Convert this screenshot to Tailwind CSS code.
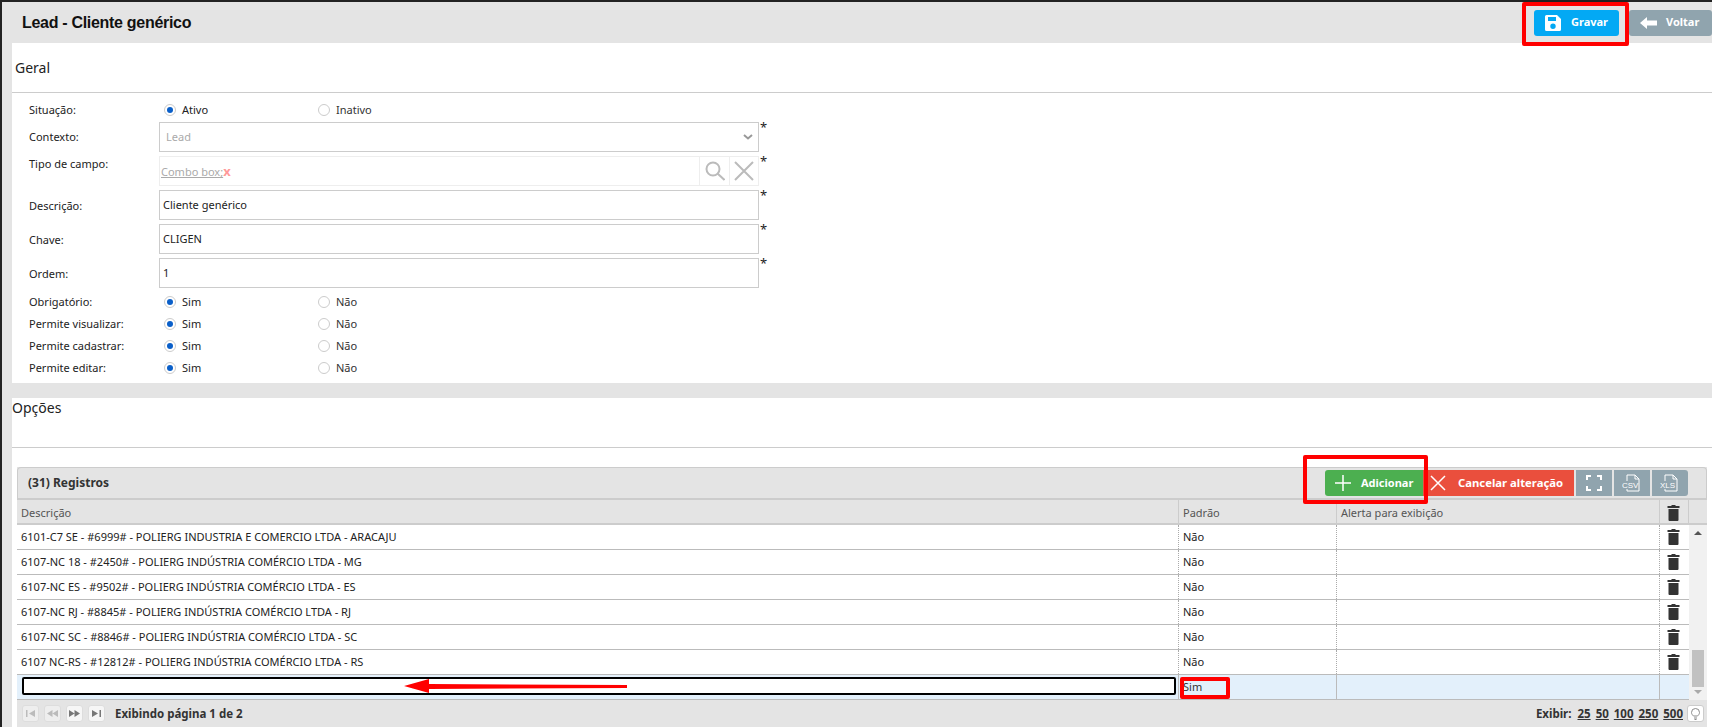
<!DOCTYPE html>
<html lang="pt-BR">
<head>
  <meta charset="UTF-8" />
  <title>Lead - Cliente genérico</title>
  <script src="https://cdn.jsdelivr.net/npm/@tailwindcss/browser@4"></script>
</head>
<body class="relative h-[727px] w-[1712px] overflow-hidden bg-[#e4e4e4] font-['Noto_Sans','DejaVu_Sans',sans-serif] text-[11px] text-[#222]">

  <!-- window edges -->
  <div class="absolute left-0 top-0 h-[2px] w-full bg-[#222]"></div>
  <div class="absolute left-0 top-0 h-[727px] w-[2px] bg-[#222]"></div>

  <!-- title bar -->
  <header class="flex h-[43px] items-center pl-[22px] pt-[2px]">
    <h1 class="flex-1 font-['Liberation_Sans',sans-serif] text-[16px] font-bold tracking-[-0.3px] text-[#111]">Lead - Cliente genérico</h1>
    <button class="flex h-[26px] w-[85px] items-center rounded-[3px] bg-[#03a9f4] pl-[11px] text-[11px] font-bold text-white">
      <svg class="h-[16px] w-[16px]" viewBox="0 0 16 16" fill="#fff"><path d="M1.5 0H12l4 4v10.5a1.5 1.5 0 0 1-1.500 1.500h-13A1.500 1.500 0 0 1 0 14.500v-13A1.500 1.500 0 0 1 1.500 0zM3 2v4h8V2zm5 6.500a2.700 2.700 0 1 0 0 5.400 2.700 2.700 0 0 0 0-5.400z" fill-rule="evenodd"/></svg>
      <span class="ml-[10px]">Gravar</span>
    </button>
    <button class="ml-[10px] flex h-[26px] w-[83px] items-center rounded-[3px] bg-[#90a4ae] pl-[11px] text-[11px] font-bold text-white">
      <svg class="h-[12px] w-[17px]" viewBox="0 0 17 12" fill="#fff"><path d="M0 6l7-6v3.500h10v5H7V12z"/></svg>
      <span class="ml-[9px]">Voltar</span>
    </button>
  </header>

  <main class="ml-[12px]">
    <!-- Geral -->
    <section class="h-[340px] bg-white">
      <h2 class="flex h-[50px] items-center border-b border-[#ccc] pl-[3px] text-[14px]">Geral</h2>

      <div class="flex h-[29px] items-center pt-[5px]">
        <span class="w-[152px] pl-[17px]">Situação:</span>
        <div class="flex w-[154px] items-center gap-[6px]"><span class="flex h-[12px] w-[12px] items-center justify-center rounded-full border border-[#ccc]"><span class="h-[6px] w-[6px] rounded-full bg-[#0a5fc9]"></span></span>Ativo</div>
        <div class="flex items-center gap-[6px] text-[#333]"><span class="h-[12px] w-[12px] rounded-full border border-[#ccc]"></span>Inativo</div>
      </div>

      <div class="flex h-[30px]">
        <span class="w-[147px] pl-[17px] pt-[7px]">Contexto:</span>
        <div class="flex h-[30px] w-[600px] items-center justify-between border border-[#ccc] pl-[6px] pr-[5px] text-[#aaa]">Lead
          <svg class="h-[6px] w-[10px]" viewBox="0 0 10 6" fill="none" stroke="#999" stroke-width="2"><path d="M1 1l4 3.500L9 1"/></svg>
        </div>
        <span class="pl-[1px] text-[13px] leading-[10px]">*</span>
      </div>

      <div class="mt-[4px] flex h-[30px]">
        <span class="w-[147px] pl-[17px] leading-[16px]">Tipo de campo:</span>
        <div class="flex h-[30px] w-[600px] border border-[#eee]">
          <div class="flex-1 pl-[1px] pt-[7px] text-[#aaa]"><span class="underline">Combo box;</span><span class="text-[13px] font-bold leading-[14px] text-[#f99]">x</span></div>
          <div class="flex w-[30px] items-center justify-center border-l border-[#eee]">
            <svg class="h-[20px] w-[20px]" viewBox="0 0 20 20" fill="none" stroke="#bbb" stroke-width="2"><circle cx="8" cy="8" r="6.500"/><path d="M12.500 12.500l7 6.500"/></svg>
          </div>
          <div class="flex w-[29px] items-center justify-center border-l border-[#eee]">
            <svg class="h-[20px] w-[20px]" viewBox="0 0 20 20" fill="none" stroke="#bbb" stroke-width="2"><path d="M1 1l18 18M19 1L1 19"/></svg>
          </div>
        </div>
        <span class="pl-[1px] text-[13px] leading-[10px]">*</span>
      </div>

      <div class="mt-[4px] flex h-[30px]">
        <span class="w-[147px] pl-[17px] pt-[8px]">Descrição:</span>
        <div class="flex h-[30px] w-[600px] items-center border border-[#ccc] pl-[3px]">Cliente genérico</div>
        <span class="pl-[1px] text-[13px] leading-[10px]">*</span>
      </div>
      <div class="mt-[4px] flex h-[30px]">
        <span class="w-[147px] pl-[17px] pt-[8px]">Chave:</span>
        <div class="flex h-[30px] w-[600px] items-center border border-[#ccc] pl-[3px]">CLIGEN</div>
        <span class="pl-[1px] text-[13px] leading-[10px]">*</span>
      </div>
      <div class="mt-[4px] flex h-[30px]">
        <span class="w-[147px] pl-[17px] pt-[8px]">Ordem:</span>
        <div class="flex h-[30px] w-[600px] items-center border border-[#ccc] pl-[3px]">1</div>
        <span class="pl-[1px] text-[13px] leading-[10px]">*</span>
      </div>

      <div class="mt-[3px]">
        <div class="flex h-[22px] items-center">
          <span class="w-[152px] pl-[17px]">Obrigatório:</span>
          <div class="flex w-[154px] items-center gap-[6px]"><span class="flex h-[12px] w-[12px] items-center justify-center rounded-full border border-[#ccc]"><span class="h-[6px] w-[6px] rounded-full bg-[#0a5fc9]"></span></span>Sim</div>
          <div class="flex items-center gap-[6px] text-[#333]"><span class="h-[12px] w-[12px] rounded-full border border-[#ccc]"></span>Não</div>
        </div>
        <div class="flex h-[22px] items-center">
          <span class="w-[152px] pl-[17px]">Permite visualizar:</span>
          <div class="flex w-[154px] items-center gap-[6px]"><span class="flex h-[12px] w-[12px] items-center justify-center rounded-full border border-[#ccc]"><span class="h-[6px] w-[6px] rounded-full bg-[#0a5fc9]"></span></span>Sim</div>
          <div class="flex items-center gap-[6px] text-[#333]"><span class="h-[12px] w-[12px] rounded-full border border-[#ccc]"></span>Não</div>
        </div>
        <div class="flex h-[22px] items-center">
          <span class="w-[152px] pl-[17px]">Permite cadastrar:</span>
          <div class="flex w-[154px] items-center gap-[6px]"><span class="flex h-[12px] w-[12px] items-center justify-center rounded-full border border-[#ccc]"><span class="h-[6px] w-[6px] rounded-full bg-[#0a5fc9]"></span></span>Sim</div>
          <div class="flex items-center gap-[6px] text-[#333]"><span class="h-[12px] w-[12px] rounded-full border border-[#ccc]"></span>Não</div>
        </div>
        <div class="flex h-[22px] items-center">
          <span class="w-[152px] pl-[17px]">Permite editar:</span>
          <div class="flex w-[154px] items-center gap-[6px]"><span class="flex h-[12px] w-[12px] items-center justify-center rounded-full border border-[#ccc]"><span class="h-[6px] w-[6px] rounded-full bg-[#0a5fc9]"></span></span>Sim</div>
          <div class="flex items-center gap-[6px] text-[#333]"><span class="h-[12px] w-[12px] rounded-full border border-[#ccc]"></span>Não</div>
        </div>
      </div>
    </section>

    <!-- Opções -->
    <section class="mt-[15px] h-[329px] bg-white">
      <h2 class="h-[50px] border-b border-[#ccc] text-[14px] leading-[20px]">Opções</h2>

      <div class="ml-[5px] mt-[19px] h-[260px] w-[1690px] bg-[#e4e4e4]">
        <div class="flex h-[33px] items-center rounded-t-[4px] border border-b-2 border-[#ccc] pl-[10px] pr-[18px]">
          <strong class="flex-1 text-[12px] font-bold text-[#333]">(31) Registros</strong>
          <button class="flex h-[26px] w-[98px] items-center rounded-l-[3px] bg-[#4caf50] pl-[10px] font-bold text-white">
            <svg class="h-[16px] w-[16px]" viewBox="0 0 16 16" stroke="#fff" stroke-width="1.500"><path d="M8 0v16M0 8h16"/></svg>
            <span class="ml-[10px]">Adicionar</span>
          </button>
          <button class="flex h-[26px] w-[151px] items-center bg-[#ea4f3d] pl-[7px] font-bold text-white">
            <svg class="h-[16px] w-[16px]" viewBox="0 0 16 16" stroke="#fff" stroke-width="1.500"><path d="M1 1l14 14M15 1L1 15"/></svg>
            <span class="ml-[12px] text-[11.300px]">Cancelar alteração</span>
          </button>
          <button class="ml-[2px] flex h-[26px] w-[36px] items-center justify-center bg-[#90a4ae]">
            <svg class="h-[16px] w-[16px]" viewBox="0 0 16 16" fill="none" stroke="#fff" stroke-width="2"><path d="M1 5V1h4M11 1h4v4M15 11v4h-4M5 15H1v-4"/></svg>
          </button>
          <button class="ml-[2px] flex h-[26px] w-[36px] items-center justify-center bg-[#90a4ae]">
            <svg class="h-[18px] w-[20px]" viewBox="0 0 20 18" fill="none" stroke="#fff"><path d="M5 7V1h8l4 4v12H5v-2M13 1v4h4"/><text x="0" y="14" fill="#fff" stroke="none" font-size="8" font-family="Liberation Sans">CSV</text></svg>
          </button>
          <button class="ml-[2px] flex h-[26px] w-[36px] items-center justify-center rounded-r-[3px] bg-[#90a4ae]">
            <svg class="h-[18px] w-[20px]" viewBox="0 0 20 18" fill="none" stroke="#fff"><path d="M5 7V1h8l4 4v12H5v-2M13 1v4h4"/><text x="0" y="14" fill="#fff" stroke="none" font-size="8" font-family="Liberation Sans">XLS</text></svg>
          </button>
        </div>

        <!-- colunas -->
        <div class="grid h-[25px] grid-cols-[1161px_158px_323px_30px_18px] border-b-2 border-[#ccc] text-[#555]">
          <div class="pl-[4px] leading-[26px]">Descrição</div>
          <div class="border-l border-[#ccc] pl-[4px] leading-[26px]">Padrão</div>
          <div class="border-l border-[#ccc] pl-[4px] leading-[26px]">Alerta para exibição</div>
          <div class="flex items-center justify-center border-x border-[#ccc] pr-[2px]">
            <svg class="h-[16px] w-[13px]" viewBox="0 0 12 16" fill="#333"><path d="M4 0h4v1h4v2H0V1h4zM1 4h10v11a1 1 0 0 1-1 1H2a1 1 0 0 1-1-1z"/></svg>
          </div>
          <div></div>
        </div>

        <div class="flex h-[175px]">
          <div class="w-[1672px] bg-white">
            <div class="grid h-[25px] grid-cols-[1161px_158px_323px_30px] items-center border-b border-[#bbb]">
              <div class="pl-[4px]">6101-C7 SE - #6999# - POLIERG INDUSTRIA E COMERCIO LTDA - ARACAJU</div>
              <div class="h-full border-l border-dotted border-[#aaa] pl-[4px] leading-[24px]">Não</div>
              <div class="h-full border-l border-dotted border-[#aaa]"></div>
              <div class="flex h-full items-center justify-center border-l border-dotted border-[#aaa] pr-[2px]"><svg class="h-[16px] w-[13px]" viewBox="0 0 12 16" fill="#333"><path d="M4 0h4v1h4v2H0V1h4zM1 4h10v11a1 1 0 0 1-1 1H2a1 1 0 0 1-1-1z"/></svg></div>
            </div>
            <div class="grid h-[25px] grid-cols-[1161px_158px_323px_30px] items-center border-b border-[#bbb]">
              <div class="pl-[4px]">6107-NC 18 - #2450# - POLIERG INDÚSTRIA COMÉRCIO LTDA - MG</div>
              <div class="h-full border-l border-dotted border-[#aaa] pl-[4px] leading-[24px]">Não</div>
              <div class="h-full border-l border-dotted border-[#aaa]"></div>
              <div class="flex h-full items-center justify-center border-l border-dotted border-[#aaa] pr-[2px]"><svg class="h-[16px] w-[13px]" viewBox="0 0 12 16" fill="#333"><path d="M4 0h4v1h4v2H0V1h4zM1 4h10v11a1 1 0 0 1-1 1H2a1 1 0 0 1-1-1z"/></svg></div>
            </div>
            <div class="grid h-[25px] grid-cols-[1161px_158px_323px_30px] items-center border-b border-[#bbb]">
              <div class="pl-[4px]">6107-NC ES - #9502# - POLIERG INDÚSTRIA COMÉRCIO LTDA - ES</div>
              <div class="h-full border-l border-dotted border-[#aaa] pl-[4px] leading-[24px]">Não</div>
              <div class="h-full border-l border-dotted border-[#aaa]"></div>
              <div class="flex h-full items-center justify-center border-l border-dotted border-[#aaa] pr-[2px]"><svg class="h-[16px] w-[13px]" viewBox="0 0 12 16" fill="#333"><path d="M4 0h4v1h4v2H0V1h4zM1 4h10v11a1 1 0 0 1-1 1H2a1 1 0 0 1-1-1z"/></svg></div>
            </div>
            <div class="grid h-[25px] grid-cols-[1161px_158px_323px_30px] items-center border-b border-[#bbb]">
              <div class="pl-[4px]">6107-NC RJ - #8845# - POLIERG INDÚSTRIA COMÉRCIO LTDA - RJ</div>
              <div class="h-full border-l border-dotted border-[#aaa] pl-[4px] leading-[24px]">Não</div>
              <div class="h-full border-l border-dotted border-[#aaa]"></div>
              <div class="flex h-full items-center justify-center border-l border-dotted border-[#aaa] pr-[2px]"><svg class="h-[16px] w-[13px]" viewBox="0 0 12 16" fill="#333"><path d="M4 0h4v1h4v2H0V1h4zM1 4h10v11a1 1 0 0 1-1 1H2a1 1 0 0 1-1-1z"/></svg></div>
            </div>
            <div class="grid h-[25px] grid-cols-[1161px_158px_323px_30px] items-center border-b border-[#bbb]">
              <div class="pl-[4px]">6107-NC SC - #8846# - POLIERG INDÚSTRIA COMÉRCIO LTDA - SC</div>
              <div class="h-full border-l border-dotted border-[#aaa] pl-[4px] leading-[24px]">Não</div>
              <div class="h-full border-l border-dotted border-[#aaa]"></div>
              <div class="flex h-full items-center justify-center border-l border-dotted border-[#aaa] pr-[2px]"><svg class="h-[16px] w-[13px]" viewBox="0 0 12 16" fill="#333"><path d="M4 0h4v1h4v2H0V1h4zM1 4h10v11a1 1 0 0 1-1 1H2a1 1 0 0 1-1-1z"/></svg></div>
            </div>
            <div class="grid h-[25px] grid-cols-[1161px_158px_323px_30px] items-center border-b border-[#bbb]">
              <div class="pl-[4px]">6107 NC-RS - #12812# - POLIERG INDÚSTRIA COMÉRCIO LTDA - RS</div>
              <div class="h-full border-l border-dotted border-[#aaa] pl-[4px] leading-[24px]">Não</div>
              <div class="h-full border-l border-dotted border-[#aaa]"></div>
              <div class="flex h-full items-center justify-center border-l border-dotted border-[#aaa] pr-[2px]"><svg class="h-[16px] w-[13px]" viewBox="0 0 12 16" fill="#333"><path d="M4 0h4v1h4v2H0V1h4zM1 4h10v11a1 1 0 0 1-1 1H2a1 1 0 0 1-1-1z"/></svg></div>
            </div>
            <!-- linha em edição -->
            <div class="grid h-[25px] grid-cols-[1161px_158px_323px_30px] items-center border-b border-[#bbb] bg-[#e3f0fb]">
              <div class="flex h-full items-center pl-[5px] pb-[2px]"><div class="h-[18px] w-[1154px] rounded-[2px] border-2 border-black bg-white"></div></div>
              <div class="h-full border-l border-[#bbb] pl-[4px] leading-[24px] text-[#333]">Sim</div>
              <div class="h-full border-l border-[#bbb]"></div>
              <div class="h-full border-l border-[#bbb]"></div>
            </div>
          </div>
          <!-- scrollbar -->
          <div class="flex w-[18px] flex-col items-center justify-between bg-[#f1f1f1] py-[6px]">
            <svg class="h-[4px] w-[8px]" viewBox="0 0 8 4" fill="#555"><path d="M0 4l4-4 4 4z"/></svg>
            <div class="mt-auto mb-[3px] h-[37px] w-[12px] bg-[#c1c1c1]"></div>
            <svg class="h-[4px] w-[8px]" viewBox="0 0 8 4" fill="#aaa"><path d="M0 0l4 4 4-4z"/></svg>
          </div>
        </div>

        <!-- rodapé -->
        <div class="flex h-[27px] items-center pl-[5px] pr-[3px]">
          <button class="flex h-[17px] w-[17px] items-center justify-center rounded-[3px] border border-[#ddd] bg-[#eee]">
            <svg class="h-[7px] w-[9px]" viewBox="0 0 9 7" fill="#bbb"><path d="M0 0h1.500v7H0zM9 0v7L3 3.500z"/></svg>
          </button>
          <button class="ml-[5px] flex h-[17px] w-[17px] items-center justify-center rounded-[3px] border border-[#ddd] bg-[#eee]">
            <svg class="h-[7px] w-[11px]" viewBox="0 0 11 7" fill="#bbb"><path d="M5.500 0v7L0 3.500zM11 0v7L5.500 3.500z"/></svg>
          </button>
          <button class="ml-[5px] flex h-[17px] w-[17px] items-center justify-center rounded-[3px] border border-[#ddd] bg-[#f6f6f6]">
            <svg class="h-[7px] w-[11px]" viewBox="0 0 11 7" fill="#777"><path d="M0 0v7l5.500-3.500zM5.500 0v7L11 3.500z"/></svg>
          </button>
          <button class="ml-[5px] flex h-[17px] w-[17px] items-center justify-center rounded-[3px] border border-[#ddd] bg-[#f6f6f6]">
            <svg class="h-[7px] w-[9px]" viewBox="0 0 9 7" fill="#777"><path d="M0 0v7l6-3.500zM7.500 0H9v7H7.500z"/></svg>
          </button>
          <strong class="ml-[10px] flex-1 text-[11.500px] font-bold text-[#333]">Exibindo página 1 de 2</strong>
          <strong class="text-[11.500px] font-bold text-[#333]">Exibir:</strong>
          <a class="ml-[6px] text-[11.500px] font-bold text-[#333] underline">25</a>
          <a class="ml-[5px] text-[11.500px] font-bold text-[#333] underline">50</a>
          <a class="ml-[5px] text-[11.500px] font-bold text-[#333] underline">100</a>
          <a class="ml-[5px] text-[11.500px] font-bold text-[#333] underline">250</a>
          <a class="ml-[5px] text-[11.500px] font-bold text-[#333] underline">500</a>
          <div class="ml-[4px] flex h-[17px] w-[17px] items-center justify-center rounded-[3px] border border-[#ccc] bg-white">
            <svg class="h-[12px] w-[9px]" viewBox="0 0 9 12" fill="none" stroke="#888"><path d="M2.500 8C1.500 7 .5 6 .5 4.500a4 4 0 0 1 8 0C8.500 6 7.500 7 6.500 8zM3 10h3M3.500 11.500h2"/></svg>
          </div>
        </div>
      </div>
    </section>
  </main>

  <!-- red annotations -->
  <div class="absolute left-[1522px] top-[2px] h-[44px] w-[107px] rounded-[2px] border-4 border-[#f00]"></div>
  <div class="absolute left-[1303px] top-[455px] h-[49px] w-[125px] rounded-[2px] border-4 border-[#f00]"></div>
  <div class="absolute left-[1180px] top-[677px] h-[22px] w-[50px] rounded-[2px] border-4 border-[#f00]"></div>
  <svg class="absolute left-[404px] top-[678px] h-[16px] w-[223px]" viewBox="0 0 223 16" fill="#f00"><path d="M0 8l25-7v5l198 1v3L25 11v4z"/></svg>

</body>
</html>
